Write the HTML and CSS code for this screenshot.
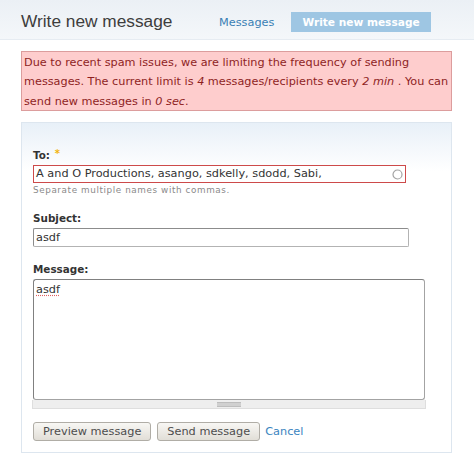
FILE: index.html
```html
<!DOCTYPE html>
<html>
<head>
<meta charset="utf-8">
<title>Write new message</title>
<link rel="stylesheet" href="styles.css">
</head>
<body>
<header class="top">
  <h1 class="title">Write new message</h1>
  <nav class="tabs">
    <a class="tab" href="#">Messages</a>
    <a class="tab tab-active" href="#">Write new message</a>
  </nav>
</header>

<div class="error">Due to recent spam issues, we are limiting the frequency of sending<br>messages. The current limit is <em>4</em> messages/recipients every <em>2 min</em> . You can<br>send new messages in <em>0 sec</em>.</div>

<form class="box">
  <div class="field">
    <label class="label">To: <span class="req">*</span></label>
    <div class="input input-to input-error">
      <span class="value">A and O Productions, asango, sdkelly, sdodd, Sabi,</span>
      <svg class="throbber" width="11" height="11" viewBox="0 0 11 11"><circle cx="5.5" cy="5.5" r="4.5" fill="none" stroke="#a3a3a3" stroke-width="1.2"/></svg>
    </div>
    <div class="desc">Separate multiple names with commas.</div>
  </div>
  <div class="field">
    <label class="label">Subject:</label>
    <div class="input input-subject">asdf</div>
  </div>
  <div class="field">
    <label class="label">Message:</label>
    <div class="textarea"><span class="misspelled">asdf</span></div>
    <div class="grip"><span class="grip-handle"></span></div>
  </div>
  <div class="actions">
    <button type="button" class="btn">Preview message</button>
    <button type="button" class="btn">Send message</button>
    <a class="cancel" href="#">Cancel</a>
  </div>
</form>
</body>
</html>
```

FILE: styles.css
```css
html, body {
  margin: 0;
  padding: 0;
}

body {
  font-family: "DejaVu Sans", Verdana, sans-serif;
  font-size: 11.3px;
  color: #333;
  background: #fff;
}

.top {
  display: flex;
  height: 40px;
  box-sizing: border-box;
  padding-left: 21px;
  background: linear-gradient(#ebf0f5, #f4f7fa);
  border-bottom: 1px solid #e6ecf2;
}

.title {
  width: 198px;
  margin: 10px 0 0;
  font: normal 17.3px/22px "Liberation Sans", Arial, sans-serif;
  color: #3d3d3d;
}

.tabs {
  display: flex;
  margin-top: 12px;
  height: 20px;
}

.tab {
  display: block;
  height: 20px;
  line-height: 21px;
  font-size: 11.3px;
  color: #3a7fb5;
  text-decoration: none;
}

.tab-active {
  margin-left: 17px;
  padding: 0 11px;
  background: #9ec6e3;
  color: #fff;
  font-weight: bold;
  font-size: 10.6px;
}

.error {
  width: 431px;
  height: 60px;
  box-sizing: border-box;
  margin: 11px 0 0 21px;
  padding: 1px 2px 0;
  border: 1px solid #dc9d9d;
  background: #fecdcd;
  color: #8e1f1f;
  font-size: 11.25px;
  line-height: 19.3px;
  white-space: nowrap;
}

.error em {
  font-style: italic;
}

.box {
  width: 431px;
  box-sizing: border-box;
  margin: 11px 0 0 21px;
  padding: 24px 11px 11px;
  border: 1px solid #dde6ef;
  background: linear-gradient(#e8f0f8, #fff 48px);
}

.field {
  margin-bottom: 16px;
}

.label {
  display: block;
  margin-bottom: 3px;
  font-weight: bold;
  font-size: 10.4px;
  line-height: 13px;
  color: #333;
}

.req {
  color: #f2b50f;
  font-size: 10px;
  vertical-align: 2px;
  margin-left: 1px;
}

.input {
  display: flex;
  align-items: center;
  box-sizing: border-box;
  height: 18px;
  padding: 0 0 0 2px;
  border: 1px solid #999;
  background: #fff;
  font-size: 11.3px;
  line-height: 16px;
  color: #333;
  white-space: nowrap;
}

.input-to {
  width: 373px;
}

.input-error {
  border-color: #cd4a4a;
}

.throbber {
  margin-left: auto;
  margin-right: 2px;
}

.desc {
  margin-top: 1px;
  font-size: 8.8px;
  line-height: 12px;
  letter-spacing: 0.6px;
  color: #8a8a8a;
}

.input-subject {
  width: 376px;
  height: 19px;
  border-radius: 2px;
  border-color: #8c8c8c #b3b3b3 #b3b3b3 #8c8c8c;
}

.textarea {
  box-sizing: border-box;
  width: 392px;
  height: 121px;
  padding: 2px;
  border: 1px solid #8f8f8f;
  border-color: #808080 #a3a3a3 #a3a3a3 #808080;
  border-radius: 3px;
  background: #fff;
  font-size: 11.3px;
  line-height: 16px;
  color: #333;
}

.misspelled {
  text-decoration: underline dotted #e06060;
  text-underline-offset: 2px;
}

.grip {
  display: flex;
  justify-content: center;
  align-items: center;
  box-sizing: border-box;
  width: 394px;
  height: 9px;
  margin-left: -1px;
  background: #eeeeee;
  border: 1px solid #dedede;
  border-top: none;
}

.grip-handle {
  display: block;
  width: 24px;
  height: 3px;
  background: #d0d0d0;
  border-top: 1px solid #bdbdbd;
  border-bottom: 1px solid #bdbdbd;
}

.actions {
  display: flex;
  align-items: center;
  margin-top: -3px;
}

.btn {
  height: 19px;
  margin: 0 6px 0 0;
  padding: 0 9px;
  border: 1px solid #b0ada6;
  border-radius: 3px;
  background: linear-gradient(#f8f7f4, #e1ded7);
  font-family: "DejaVu Sans", Verdana, sans-serif;
  font-size: 11.3px;
  line-height: 17px;
  color: #4d4d4d;
}

.cancel {
  margin-left: -1px;
  font-size: 11.3px;
  color: #3a84c0;
  text-decoration: none;
}
```
